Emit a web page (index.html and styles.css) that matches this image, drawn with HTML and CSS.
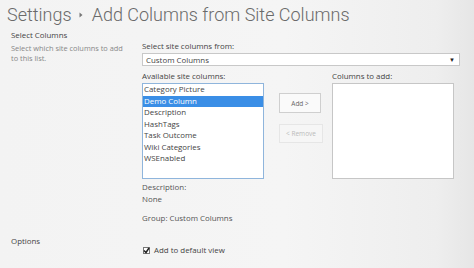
FILE: index.html
```html
<!DOCTYPE html>
<html>
<head>
<meta charset="utf-8">
<link rel="stylesheet" href="styles.css">
</head>
<body>
<div class="page">
  <h1 class="title">Settings<svg class="sep" width="4" height="6" viewBox="0 0 4 6"><path d="M0.5 0.5 L3.5 3 L0.5 5.5 Z" fill="#777"/></svg>Add Columns from Site Columns</h1>
  <section class="row cols">
    <div class="side">
      <h2 class="side-head">Select Columns</h2>
      <p class="side-desc">Select which site columns to add<br>to this list.</p>
    </div>
    <div class="main">
      <div class="lbl">Select site columns from:</div>
      <div class="dropdown"><span>Custom Columns</span><span class="arrow">▼</span></div>
      <div class="pickers">
        <div class="pick">
          <div class="lbl">Available site columns:</div>
          <ul class="listbox focus">
            <li>Category Picture</li>
            <li class="sel">Demo Column</li>
            <li>Description</li>
            <li>HashTags</li>
            <li>Task Outcome</li>
            <li>Wiki Categories</li>
            <li>WSEnabled</li>
          </ul>
        </div>
        <div class="btns">
          <button class="btn">Add &gt;</button>
          <button class="btn dis">&lt; Remove</button>
        </div>
        <div class="pick">
          <div class="lbl">Columns to add:</div>
          <ul class="listbox"></ul>
        </div>
      </div>
      <div class="info">
        <div>Description:</div>
        <div>None</div>
        <div class="group">Group: Custom Columns</div>
      </div>
    </div>
  </section>
  <section class="row opts">
    <div class="side">
      <h2 class="side-head">Options</h2>
    </div>
    <div class="main">
      <label class="check"><span class="box"><svg width="7" height="7" viewBox="0 0 7 7"><path d="M1 3.5 L3 5.5 L6 1" stroke="#222" stroke-width="1.5" fill="none"/></svg></span>Add to default view</label>
    </div>
  </section>
</div>
</body>
</html>
```
FILE: styles.css
```css
* { box-sizing: border-box; }
html, body { margin: 0; padding: 0; }
body {
  width: 474px;
  height: 268px;
  overflow: hidden;
  background: linear-gradient(90deg, #f3f3f3 0%, #f5f5f5 60%, #eeeeee 92%, #e6e6e6 100%);
  font-family: "Open Sans", "Noto Sans", sans-serif;
  color: #555;
  font-size: 7.9px;
}
.title {
  margin: 0;
  padding: 3px 0 0 7px;
  height: 29px;
  font-family: Roboto, "Open Sans", sans-serif;
  font-weight: 300;
  font-size: 18px;
  line-height: 24px;
  color: #6a6a6a;
  white-space: nowrap;
}
.sep { margin: 0 9px 0 7px; vertical-align: middle; position: relative; top: -1px; }
.row { display: flex; }
.side { width: 142px; padding-left: 11px; flex: none; }
.side-head { margin: 0; font-size: 7.9px; font-weight: 400; color: #444; line-height: 12px; }
.side-desc { margin: 2px 0 0; font-size: 7.4px; line-height: 10px; color: #888; white-space: nowrap; }
.main { flex: 1; padding-right: 14px; }
.cols .main { padding-top: 12px; }
.lbl { color: #444; line-height: 11px; }
.dropdown {
  margin-top: 1px;
  height: 13px;
  border: 1px solid #c8c8c8;
  background: #fff;
  display: flex;
  justify-content: space-between;
  align-items: center;
  padding: 0 4px 0 3px;
  color: #444;
  width: 318px;
}
.arrow { font-size: 6px; color: #222; }
.pickers { display: flex; margin-top: 5px; }
.pick { display: flex; flex-direction: column; }
.listbox {
  list-style: none;
  margin: 1px 0 0;
  padding: 0;
  width: 122px;
  height: 96px;
  background: #fff;
  border: 1px solid #c6c6c6;
}
.listbox.focus { border-color: #8fb5dc; }
.listbox li { line-height: 11.5px; padding-left: 1px; color: #444; white-space: nowrap; }
.listbox li.sel { background: #3a8ee6; color: #fff; }
.btns { width: 68px; display: flex; flex-direction: column; align-items: flex-start; padding: 22px 0 0 15px; gap: 11px; }
.btn {
  font-family: inherit;
  font-size: 6.5px;
  color: #666;
  background: #fafafa;
  border: 1px solid #cfcfcf;
  height: 20px;
  padding: 0;
  width: 42px;
}
.btn.dis { color: #bbb; border-color: #e6e6e6; background: #f6f6f6; width: 44px; height: 19px; }
.info { margin-top: 2px; line-height: 12px; color: #555; }
.group { margin-top: 7px; }
.opts { margin-top: 10px; }
.opts .side-head { padding-top: 1px; }
.opts .main { padding-top: 11px; }
.check { display: flex; align-items: center; color: #444; padding-left: 1px; }
.box { width: 7px; height: 7px; border: 1px solid #777; background: #fff; margin-right: 4px; display: inline-flex; }
.box svg { margin: -1px; }
```
